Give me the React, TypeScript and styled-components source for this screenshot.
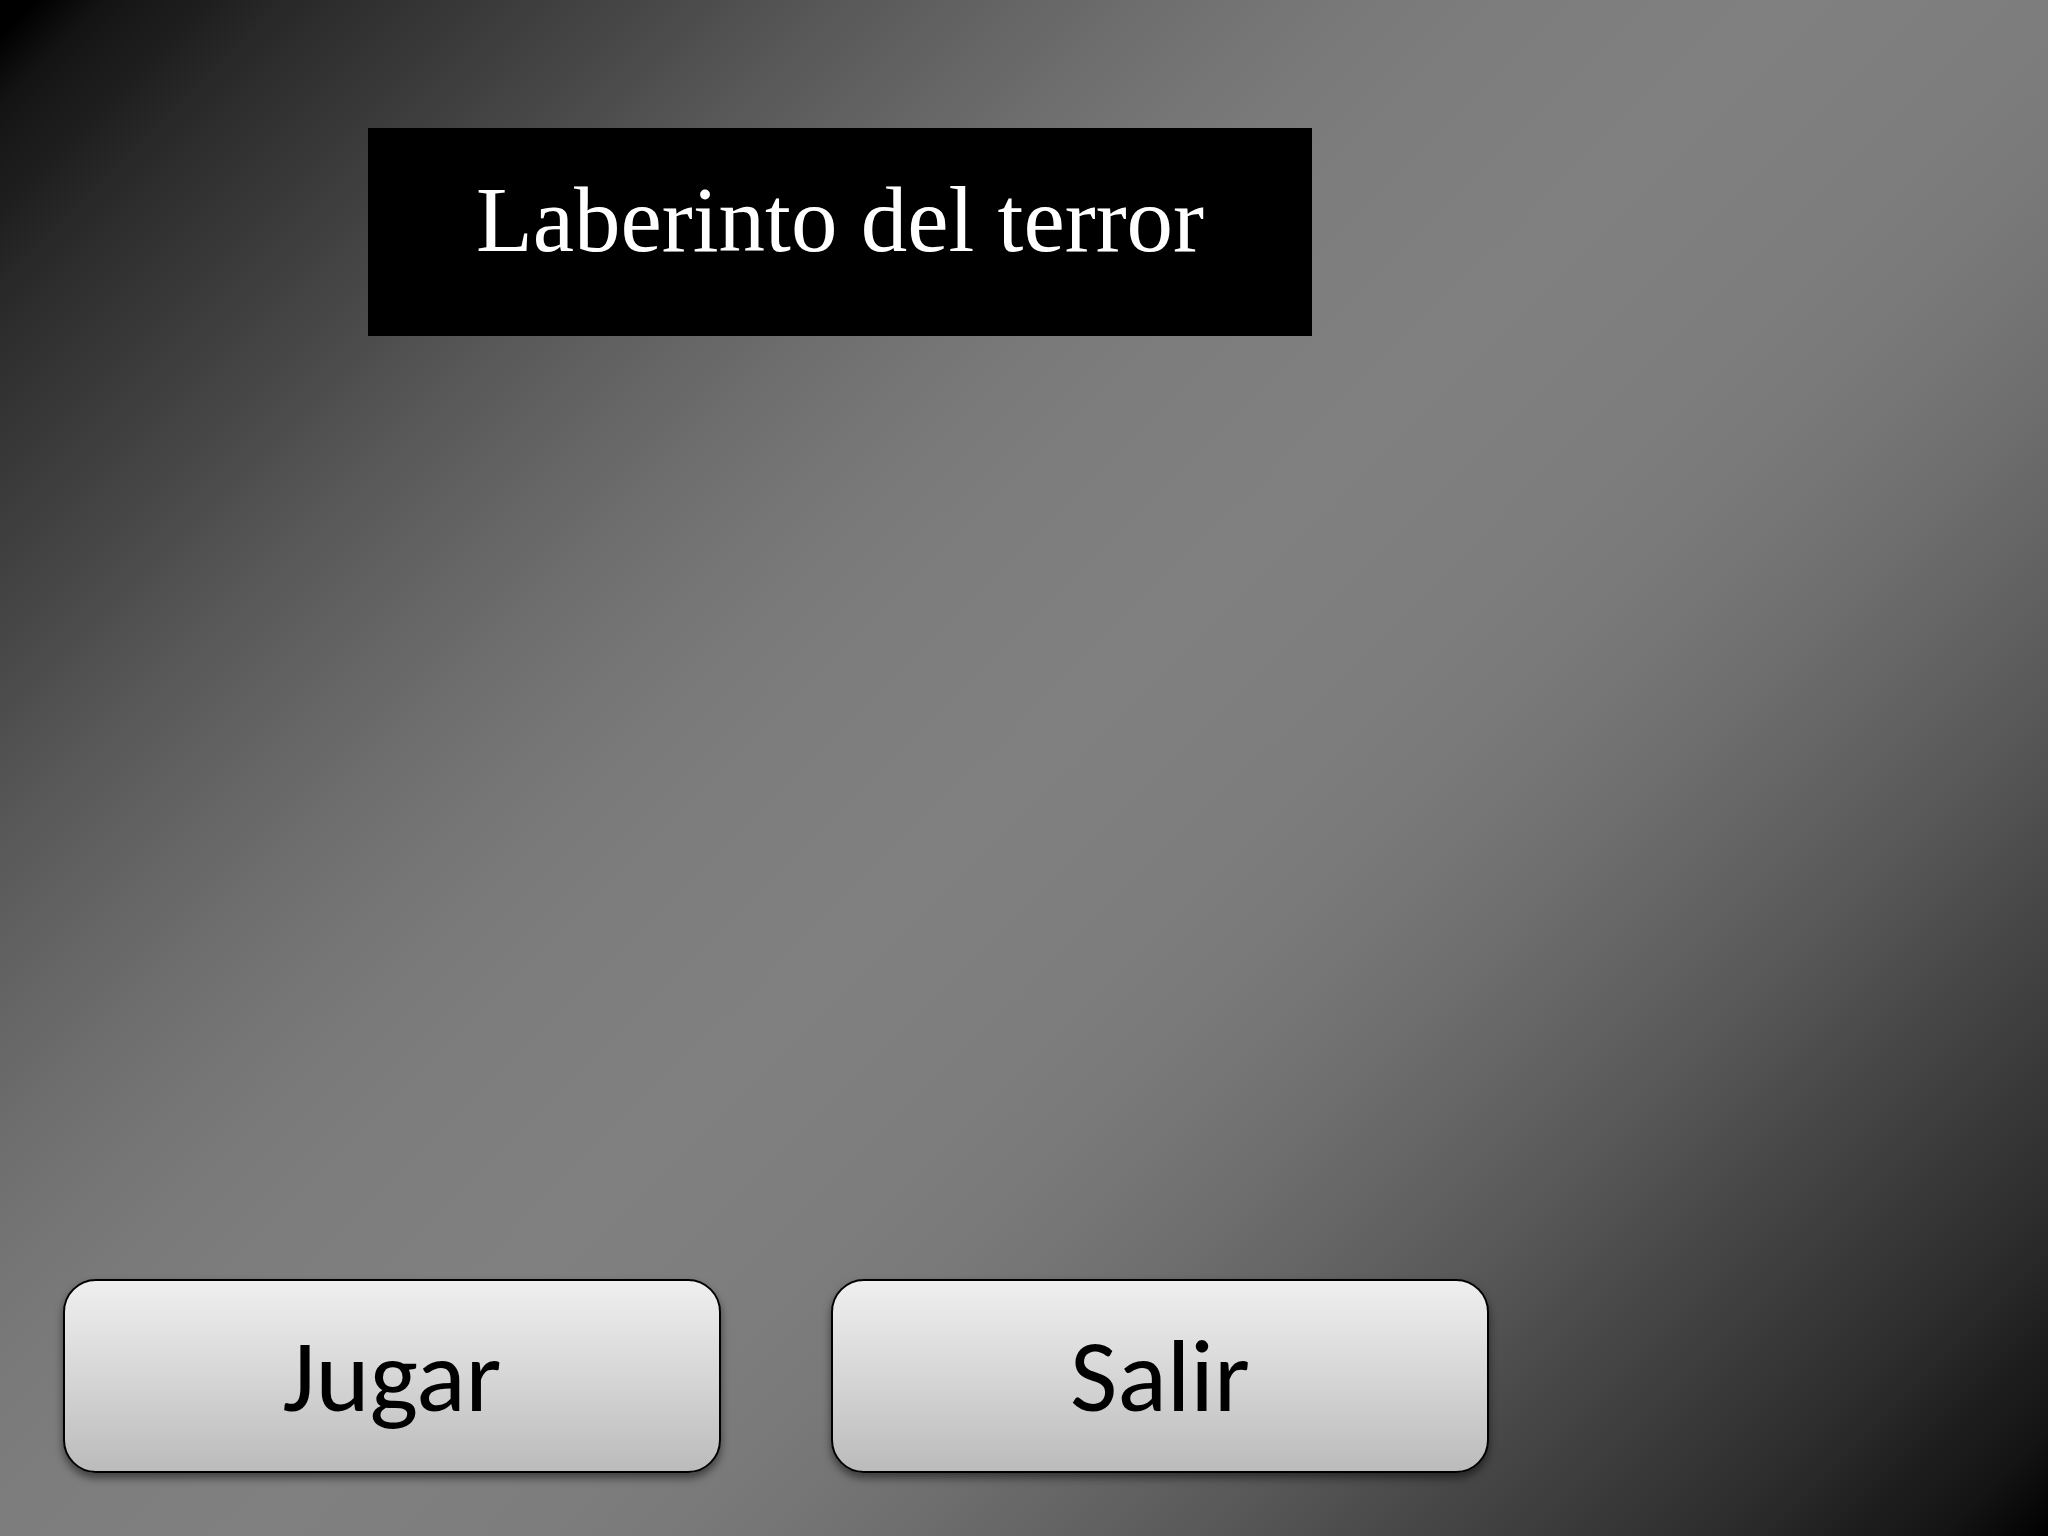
import React from "react";
import styled, { createGlobalStyle } from "styled-components";

const GlobalStyle = createGlobalStyle`
  * { box-sizing: border-box; }
  body { margin: 0; background: #000; }
`;

const Screen = styled.main`
  min-height: 100vh;
  padding: 128px 0 63px;
  display: flex;
  flex-direction: column;
  justify-content: space-between;
  background: linear-gradient(
    135deg,
    #000 1%, #141414 3%, #1f1f1f 6%, #282828 8%, #323232 11%, #3e3e3e 15%,
    #4a4a4a 19%, #575757 23%, #646464 28%, #707070 33%, #797979 38%, #7e7e7e 44%, #808080 50%,
    #7e7e7e 56%, #797979 62%, #707070 67%, #646464 72%, #575757 77%, #4a4a4a 81%,
    #3e3e3e 85%, #323232 89%, #282828 92%, #1f1f1f 94%, #141414 97%, #000 100%
  );
`;

const Header = styled.header`
  display: grid;
  grid-template-columns: 23fr 59fr 46fr;
`;

const Title = styled.h1`
  grid-column: 2;
  margin: 0;
  padding: 40px 0 64px;
  background: #000;
  color: #fff;
  font: 400 93px/104px "Liberation Serif", serif;
  text-align: center;
`;

const Menu = styled.nav`
  display: grid;
  grid-template-columns: 63fr 658fr 110fr 658fr 559fr;
`;

const MenuButton = styled.button<{ $column: number }>`
  grid-column: ${({ $column }) => $column};
  height: 194px;
  padding: 0;
  border: 2px solid #000;
  border-radius: 33px;
  background: linear-gradient(#efefef, #d9d9d9 45%, #bbb);
  box-shadow: 0 5px 8px rgba(0, 0, 0, 0.5);
  color: #000;
  font: 400 103px/112px Carlito, Lato, sans-serif;
  cursor: pointer;
`;

export default function App() {
  return (
    <>
      <GlobalStyle />
      <Screen>
        <Header>
          <Title>Laberinto del terror</Title>
        </Header>
        <Menu>
          <MenuButton type="button" $column={2}>Jugar</MenuButton>
          <MenuButton type="button" $column={4}>Salir</MenuButton>
        </Menu>
      </Screen>
    </>
  );
}
